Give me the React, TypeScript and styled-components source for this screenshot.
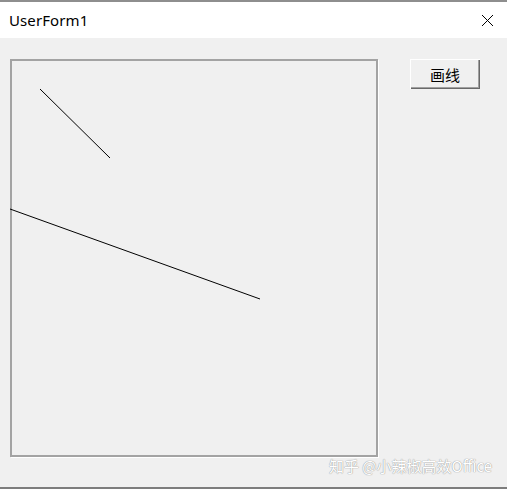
import React from 'react'
import styled, { createGlobalStyle } from 'styled-components'

const GlobalStyle = createGlobalStyle`
  html, body {
    margin: 0;
    padding: 0;
    background: #f0f0f0;
  }
`

const Window = styled.div`
  position: relative;
  width: 507px;
  height: 489px;
  display: flex;
  flex-direction: column;
  background: #f0f0f0;
  overflow: hidden;
`

const TopEdge = styled.div`
  height: 2px;
  background: #8e8e8e;
`

const TitleBar = styled.div`
  height: 36px;
  background: #ffffff;
  display: flex;
  align-items: center;
  justify-content: space-between;
  padding: 0 13px 0 9px;
`

const Title = styled.span`
  font-family: 'Noto Sans', 'Noto Sans CJK SC', sans-serif;
  font-size: 15px;
  color: #000;
  letter-spacing: 0.1px;
`

const CloseIcon = styled.svg`
  width: 13px;
  height: 13px;
  display: block;
`

const Body = styled.div`
  flex: 1;
  display: flex;
  align-items: flex-start;
  padding: 21px 0 0 10px;
  gap: 32px;
`

const Frame = styled.div`
  position: relative;
  width: 364px;
  height: 394px;
  border: 2px solid #a3a3a3;
  box-shadow: 1px 1px 0 #ffffff;
  background: #f0f0f0;
`

const Drawing = styled.svg`
  position: absolute;
  left: -2px;
  top: -2px;
  overflow: visible;
`

const Button = styled.button`
  width: 70px;
  height: 30px;
  padding: 0;
  background: #f0f0f0;
  border: none;
  box-shadow: inset 1px 1px 0 #ffffff, inset -1px -1px 0 #696969, inset -2px -2px 0 #a0a0a0;
  font-family: 'Noto Sans CJK SC', sans-serif;
  font-size: 15px;
  color: #000;
  display: flex;
  align-items: center;
  justify-content: center;
`

const BottomEdge = styled.div`
  height: 2px;
  background: #7d7d7d;
`

const Watermark = styled.div`
  position: absolute;
  left: 329px;
  top: 455px;
  font-family: 'Noto Sans CJK SC', 'Noto Sans', sans-serif;
  font-size: 15px;
  color: #ffffff;
  text-shadow: 0 0 1px #9a9a9a, 0 0 1px #9a9a9a;
  white-space: nowrap;
`

export default function App() {
  return (
    <>
      <GlobalStyle />
      <Window>
        <TopEdge />
        <TitleBar>
          <Title>UserForm1</Title>
          <CloseIcon viewBox="0 0 13 13">
            <path d="M1 1 L12 12 M12 1 L1 12" stroke="#000" strokeWidth="1" fill="none" />
          </CloseIcon>
        </TitleBar>
        <Body>
          <Frame>
            <Drawing width="368" height="398" viewBox="0 0 368 398">
              <line x1="30" y1="30" x2="100" y2="99" stroke="#000" strokeWidth="1" />
              <line x1="0" y1="150" x2="250" y2="240" stroke="#000" strokeWidth="1" />
            </Drawing>
          </Frame>
          <Button>画线</Button>
        </Body>
        <BottomEdge />
        <Watermark>知乎 @小辣椒高效Office</Watermark>
      </Window>
    </>
  )
}
